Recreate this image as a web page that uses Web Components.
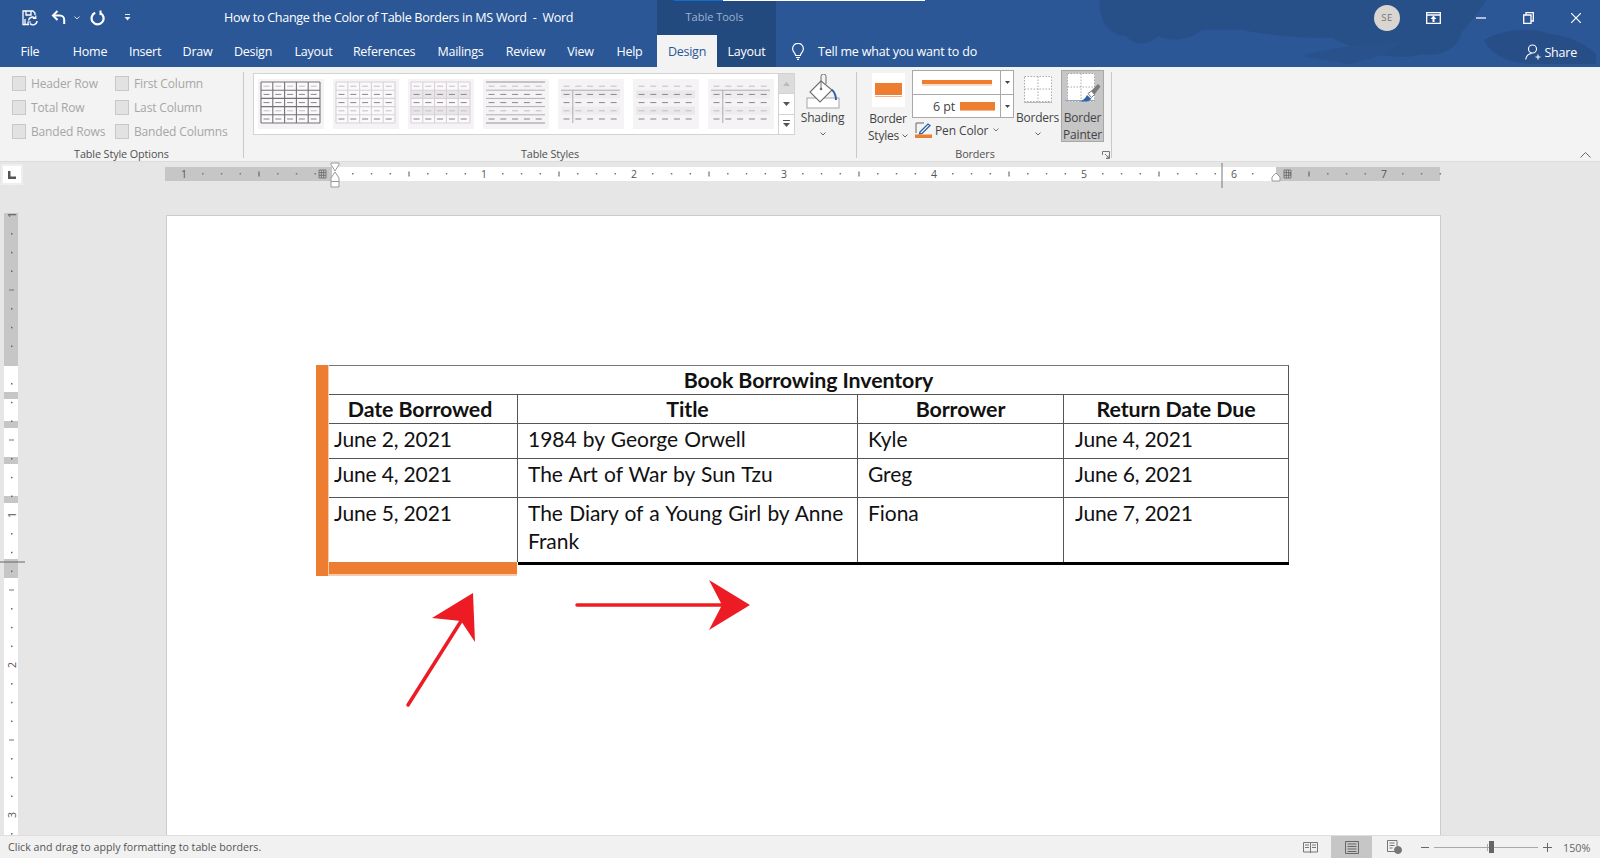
<!DOCTYPE html>
<html lang="en">
<head>
<meta charset="utf-8">
<title>How to Change the Color of Table Borders in MS Word - Word</title>
<style>
  html, body { margin: 0; height: 100%; overflow: hidden; background: #e6e6e6; }
  body { font-family: "Open Sans", "Noto Sans", sans-serif; }
</style>
</head>
<body>
<word-app>
  <word-titlebar></word-titlebar>
  <word-ribbon></word-ribbon>
  <word-document>
    <word-table></word-table>
  </word-document>
  <word-status>Click and drag to apply formatting to table borders.</word-status>
</word-app>

<script>
// shared base: open shadow root filled from css + render()
class Part extends HTMLElement {
  connectedCallback() {
    this.attachShadow({ mode: "open" });
    this.shadowRoot.innerHTML = `<style>${this.css()}</style>${this.render()}`;
  }
  css() { return ":host{display:block}"; }
  render() { return "<slot></slot>"; }
}

class WordApp extends Part {
  css() {
    return `:host { display: flex; flex-direction: column; width: 1600px; height: 858px; overflow: hidden; }`;
  }
}

const TABS = [
  ["File", 40, 12], ["Home", 56], ["Insert", 54], ["Draw", 51], ["Design", 60], ["Layout", 61],
  ["References", 80], ["Mailings", 73], ["Review", 57], ["View", 53], ["Help", 45, 5],
  ["Design", 60, 0, "active"], ["Layout", 59],
];

class WordTitlebar extends Part {
  css() {
    return `
      :host {
        display: block; position: relative; height: 67px; flex: none; color: #fff; overflow: hidden;
        background: linear-gradient(to right, #2b5797 657px, #234a7f 657px, #234a7f 776px, #2b5797 776px);
        font-size: 12.5px;
      }
      .clouds { position: absolute; left: 0; top: 0; }
      .progress { position: absolute; left: 674px; top: 0; width: 251px; height: 1px;
        background: linear-gradient(to right, #0f6fd0 49px, #fff 49px); }
      .row { position: relative; display: flex; align-items: center; }
      .top { height: 35px; }
      .bottom { height: 32px; }
      svg { display: block; flex: none; }
      .title { margin-left: 93px; width: 431px; white-space: nowrap; letter-spacing: -.3px; font-size: 12.6px; }
      .context { width: 119px; text-align: center; color: #9fb3d1; font-size: 11px; margin-top: -2px; }
      .tab { flex: none; height: 32px; line-height: 34px; text-align: center; letter-spacing: -.25px; }
      .tab.active { background: #f3f3f3; color: #2b5797; }
      .tell { margin-left: 14px; letter-spacing: -.2px; white-space: nowrap; }
      .share { margin-left: auto; margin-right: 23px; margin-top: 2px; display: flex; align-items: center; gap: 3px; letter-spacing: -.2px; }
      .avatar { width: 26px; height: 26px; border-radius: 50%; background: #d9d5d1; color: #777;
        font-size: 9.5px; line-height: 26px; text-align: center; letter-spacing: .5px; }
      .controls { margin-left: auto; display: flex; align-items: center; margin-right: 19px; }
    `;
  }
  render() {
    const tabs = TABS.map(([name, w, gap, cls]) =>
      `<div class="tab ${cls || ""}" style="width:${w}px;margin-right:${gap || 0}px">${name}</div>`).join("");
    return `
      <svg class="clouds" width="1600" height="68" viewBox="0 0 1600 68" fill="#285088">
        <path d="M1100 0c-2 18 8 36 26 36 10 12 24 8 32 0 18 8 34 2 44-6l40 0c30 6 60 8 90 8 16 8 60 26 90 16 20 4 36-6 40-22 12-14 20-24 24-32z"/>
        <path d="M1484 40c18-10 44-14 66-6 20 2 34 10 46 20v10h-60c-20 0-44-6-52-24z" fill="#274e86"/>
        <path d="M1300 56c30-8 62-12 100-14-6 10-30 18-52 22z" fill="#29518c"/>
      </svg>
      <div class="progress"></div>
      <div class="row top">
        <svg style="margin-left:22px" width="16" height="16" viewBox="0 0 16 16" fill="none" stroke="#fff" stroke-width="1.3">
          <path d="M7 14.5H1V1h10l2 2v2"/><path d="M4 1v4h5V1M3 9v5"/>
          <path d="M6.5 10.5a4 4 0 0 1 7-2M15 11a4 4 0 0 1-7 2.5" stroke-width="1.4"/>
          <path d="M13.8 5.5v3h-3M6 15v-3h3" stroke-width="1.2"/>
        </svg>
        <svg style="margin-left:13px" width="16" height="15" viewBox="0 0 16 15" fill="none" stroke="#fff" stroke-width="2">
          <path d="M2.5 5.5H9a4.2 4.2 0 0 1 4.2 4.2V14"/><path d="M6.5 1 2 5.5 6.5 10"/>
        </svg>
        <svg style="margin-left:7px" width="6" height="4" viewBox="0 0 6 4" fill="none" stroke="#d5deec"><path d="M.5.5 3 3 5.5.5"/></svg>
        <svg style="margin-left:10px" width="15" height="16" viewBox="0 0 15 16" fill="none" stroke="#fff" stroke-width="2.2">
          <path d="M5.2 2.8a6 6 0 1 0 5 .1"/><path d="M10.5 .5v4.6" stroke-width="2"/>
        </svg>
        <svg style="margin-left:19px" width="7" height="7" viewBox="0 0 7 7" fill="#e8edf5"><path d="M1 0h5v1H1zM.5 3h6L3.5 6.500z"/></svg>
        <div class="title">How to Change the Color of Table Borders in MS Word&nbsp; -&nbsp; Word</div>
        <div class="context">Table Tools</div>
        <div class="controls">
          <div class="avatar" style="margin-right:26px">SE</div>
          <svg style="margin-right:35px" width="15" height="12" viewBox="0 0 15 12"><path d="M.7.7h13.600v10.600H.7zM.7 3h13.600" fill="none" stroke="#fff" stroke-width="1.300"/><path d="M7.500 3.500 4.500 7h2v3h2V7h2z" fill="#fff"/></svg>
          <svg style="margin-right:37px" width="10" height="2" viewBox="0 0 10 2"><path d="M0 1h10" stroke="#e6ecf5" stroke-width="1.400"/></svg>
          <svg style="margin-right:37px" width="11" height="12" viewBox="0 0 11 12" fill="none" stroke="#fff" stroke-width="1.300"><path d="M.7 3h7.300v8.300H.7zM3 3V.7h7.300v8.300H8"/></svg>
          <svg width="10" height="10" viewBox="0 0 10 10" fill="none" stroke="#fff" stroke-width="1.200"><path d="M0 0l10 10M10 0 0 10"/></svg>
        </div>
      </div>
      <div class="row bottom">
        <div style="width:10px;flex:none"></div>
        ${tabs}
        <svg style="margin-left:16px;margin-top:1px" width="12" height="17" viewBox="0 0 12 17" fill="none" stroke="#fff" stroke-width="1.200"><path d="M3.600 12.500c0-2.500-3-3.500-3-6.800a5.400 5.400 0 0 1 10.800 0c0 3.300-3 4.300-3 6.800zM4 14.500h4M5 16.300h2"/></svg>
        <div class="tell">Tell me what you want to do</div>
        <div class="share">
          <svg width="16" height="16" viewBox="0 0 16 16" fill="none" stroke="#fff" stroke-width="1.100"><circle cx="7.500" cy="5" r="4"/><path d="M.7 15.500c.6-3.500 3-5.800 6-6M10.500 13h5M13 10.500v5"/></svg>
          <span>Share</span>
        </div>
      </div>`;
  }
}

class RibbonGroup extends Part {
  css() {
    return `
      :host { display: flex; flex-direction: column; flex: none; height: 86px; margin-top: 5px;
        border-right: 1px solid #c9c9c9; box-sizing: border-box; position: relative; }
      .content { flex: 1; display: flex; min-height: 0; }
      .label { height: 16px; margin-bottom: -4px; line-height: 16px; text-align: center; font-size: 10.800px;
        color: #505050; letter-spacing: -.1px; }
      :host([launcher]) .label { padding-right: 18px; }
      svg { position: absolute; right: 1px; bottom: -1px; }
    `;
  }
  render() {
    const launcher = this.hasAttribute("launcher")
      ? `<svg width="8" height="8" viewBox="0 0 8 8" fill="none" stroke="#777"><path d="M.5 4V.5H7.500v7H4M3 3l4 4M7 4.500V7H4.500"/></svg>` : "";
    return `<div class="content"><slot></slot></div><div class="label">${this.getAttribute("label")}</div>${launcher}`;
  }
}

class RibbonCheck extends Part {
  css() {
    return `
      :host { display: flex; align-items: center; height: 24px; color: #a6a6a6; font-size: 12px; letter-spacing: -.15px; white-space: nowrap; }
      i { width: 12px; height: 13px; margin-right: 5px; flex: none; background: #e2e2e2; border: 1px solid #c8c8c8; }
    `;
  }
  render() { return `<i></i><slot></slot>`; }
}

// little table-style preview in the gallery
class TableThumb extends Part {
  css() { return `:host { display: block; flex: none; width: 66px; height: 50px; background: #f6f3f6; } svg { display: block; }`; }
  render() {
    const kind = this.getAttribute("kind");
    const x0 = 3, y0 = 3, cw = 11.8, rh = 8.2;
    let s = "";
    const line = (x1, y1, x2, y2, c, w) => `<path d="M${x1} ${y1}L${x2} ${y2}" stroke="${c}" stroke-width="${w || 1}"/>`;
    const band = (y, c) => `<rect x="${x0}" y="${y}" width="${cw * 5}" height="${rh}" fill="${c}"/>`;
    if (kind === "grid" || kind === "light" || kind === "banded") {
      const c = kind === "grid" ? "#767276" : "#d6d2d6";
      s += `<rect x="${x0}" y="${y0}" width="${cw * 5}" height="${rh * 5}" fill="#fbf9fb"/>`;
      if (kind === "banded") s += band(y0 + rh, "#e9e6e9") + band(y0 + rh * 3, "#e9e6e9");
      for (let i = 0; i <= 5; i++) {
        s += line(x0 + i * cw, y0, x0 + i * cw, y0 + rh * 5, c, 1.1);
        s += line(x0, y0 + i * rh, x0 + cw * 5, y0 + i * rh, c, 1.1);
      }
    } else if (kind === "lines") {
      for (let i = 0; i <= 5; i++) s += line(x0, y0 + i * rh, x0 + cw * 5, y0 + i * rh, i % 5 === 0 ? "#c6c2c6" : "#b2aeb2", i % 5 === 0 ? 2 : 1);
    } else if (kind === "stub") {
      s += band(y0 + rh, "#efecef") + band(y0 + rh * 3, "#efecef");
      s += line(x0, y0 + rh, x0 + cw * 5, y0 + rh, "#aeaaae", 1);
      s += line(x0 + cw, y0 + rh, x0 + cw, y0 + rh * 5, "#aeaaae", 1);
    } else if (kind === "plain") {
      s += band(y0 + rh, "#ebe8eb") + band(y0 + rh * 3, "#ebe8eb");
    }
    for (let r = 0; r < 5; r++) {
      for (let c = 0; c < 5; c++) {
        const x = x0 + c * cw + 2.5, y = y0 + r * rh + 4.2;
        const col = r === 0 || r === 3 ? "#c2bec2" : "#8a868a";
        s += line(x, y, x + 6, y, col, 1);
      }
    }
    return `<svg width="66" height="50" viewBox="0 0 66 50">${s}</svg>`;
  }
}

class StyleGallery extends Part {
  css() {
    return `
      :host { display: flex; flex: none; width: 542px; height: 62px; box-sizing: border-box; margin: 1px 0 0 9px;
        background: #fff; border: 1px solid #d3d3d3; }
      .items { flex: 1; display: flex; gap: 9px; padding: 5px 0 0 4px; }
      .scroll { width: 15px; flex: none; display: flex; flex-direction: column; border-left: 1px solid #d3d3d3; }
      .scroll div { flex: 1; display: flex; align-items: center; justify-content: center; }
      .scroll div + div { border-top: 1px solid #d3d3d3; }
      .up { background: #dcdcdc; }
    `;
  }
  render() {
    return `<div class="items"><slot></slot></div>
      <div class="scroll">
        <div class="up"><svg width="7" height="4" viewBox="0 0 7 4" fill="#bbb"><path d="M0 4h7L3.500 0z"/></svg></div>
        <div><svg width="7" height="4" viewBox="0 0 7 4" fill="#555"><path d="M0 0h7L3.500 4z"/></svg></div>
        <div><svg width="7" height="8" viewBox="0 0 7 8" fill="#555"><path d="M0 0h7v1H0zM0 3h7L3.500 7z"/></svg></div>
      </div>`;
  }
}

// tall ribbon button: icon on top, caption under it, optional chevron
class RibbonButton extends Part {
  css() {
    return `
      :host { display: flex; flex-direction: column; align-items: center; flex: none; box-sizing: border-box;
        font-size: 12px; color: #444; line-height: 16.500px; letter-spacing: -.2px; text-align: center; white-space: nowrap; }
      :host([pressed]) { background: #c6c6c6; border: 1px solid #a8a8a8; color: #444; }
      .icon { display: flex; justify-content: center; align-items: flex-end; }
      .chev { display: block; margin: 5px auto 0; }
    `;
  }
  render() {
    const chev = this.hasAttribute("chevron")
      ? `<svg class="chev" width="6" height="4" viewBox="0 0 6 4" fill="none" stroke="#666"><path d="M.5.5 3 3 5.500.5"/></svg>` : "";
    return `<div class="icon"><slot name="icon"></slot></div><div><slot></slot></div>${chev}`;
  }
}

class BorderControls extends Part {
  css() {
    return `
      :host { display: block; flex: none; width: 102px; margin-left: 1px; }
      .box { height: 48px; box-sizing: border-box; border: 1px solid #a9a9a9; background: #fff; display: grid;
        grid-template-columns: 1fr 13px; grid-template-rows: 1fr 1fr; }
      .box > div { display: flex; align-items: center; min-width: 0; }
      .cell-b { border-top: 1px solid #a9a9a9; }
      .drop { border-left: 1px solid #a9a9a9; justify-content: center; }
      .pen { display: flex; align-items: center; height: 20px; margin-top: 2px; padding-left: 3px; font-size: 12px; color: #444; letter-spacing: -.12px; }
      .pt { font-size: 12.500px; color: #444; margin-left: 20px; margin-right: 5px; letter-spacing: -.1px; }
    `;
  }
  render() {
    const arrow = `<svg width="5" height="3" viewBox="0 0 5 3" fill="#444"><path d="M0 0h5L2.500 3z"/></svg>`;
    return `
      <div class="box">
        <div><svg style="margin-left:9px" width="70" height="7" viewBox="0 0 70 7"><rect y="1" width="70" height="4" fill="#ed7d31"/><rect y="5.500" width="70" height="1" fill="#f6b98f"/></svg></div>
        <div class="drop">${arrow}</div>
        <div class="cell-b"><span class="pt">6 pt</span><svg width="35" height="9" viewBox="0 0 35 9"><rect width="35" height="8" fill="#ed7d31"/><rect y="8" width="35" height="1" fill="#f6b98f"/></svg></div>
        <div class="cell-b drop">${arrow}</div>
      </div>
      <div class="pen">
        <svg width="18" height="16" viewBox="0 0 18 16" fill="none" style="margin-right:2px;flex:none">
          <path d="M1 11V1h8" stroke="#666"/><path d="M5 10 13 2l2 1.500L7 11.500 4.500 12z" fill="#fff" stroke="#2b5fa8" stroke-width="1.300"/>
          <rect y="12.500" width="17" height="3.500" fill="#ed7d31"/>
        </svg>
        <span>Pen Color</span>
        <svg style="margin-left:5px" width="6" height="4" viewBox="0 0 6 4" fill="none" stroke="#777"><path d="M.5.5 3 3 5.500.5"/></svg>
      </div>`;
  }
}

class WordRibbon extends Part {
  css() {
    return `
      :host { display: flex; height: 95px; flex: none; box-sizing: border-box; background: #f3f3f3;
        border-bottom: 1px solid #dcdcdc; position: relative; }
      .checks { display: grid; grid-template-columns: 103px auto; margin: -1px 0 0 12px; align-content: start; }
      .collapse { position: absolute; right: 9px; bottom: 3px; }
      svg { display: block; }
      .border-styles { width: 46px; margin-left: 8px; }
      .white { width: 33px; height: 34px; background: #fff; display: flex; align-items: center; justify-content: center; margin: 3px 0 4px; }
      .group3 { display: flex; margin-top: -2px; }
      .g3btn { margin-left: 2px; width: 43px; padding-top: 6px; }
      .painter { margin-left: 2px; width: 43px; height: 72px; padding-top: 1px; }
    `;
  }
  render() {
    return `
      <ribbon-group label="Table Style Options" style="width:244px">
        <div class="checks">
          <ribbon-check>Header Row</ribbon-check><ribbon-check>First Column</ribbon-check>
          <ribbon-check>Total Row</ribbon-check><ribbon-check>Last Column</ribbon-check>
          <ribbon-check>Banded Rows</ribbon-check><ribbon-check>Banded Columns</ribbon-check>
        </div>
      </ribbon-group>
      <ribbon-group label="Table Styles" style="width:613px">
        <style-gallery>
          <table-thumb kind="grid"></table-thumb>
          <table-thumb kind="light"></table-thumb>
          <table-thumb kind="banded"></table-thumb>
          <table-thumb kind="lines"></table-thumb>
          <table-thumb kind="stub"></table-thumb>
          <table-thumb kind="plain"></table-thumb>
          <table-thumb kind="stub"></table-thumb>
        </style-gallery>
        <ribbon-button chevron style="margin-left:5px;width:45px;padding-top:2px">
          <svg slot="icon" width="34" height="35" viewBox="0 0 34 35" fill="none" style="margin-bottom:1px">
            <rect x="1" y="24" width="32" height="10" fill="#fff" stroke="#a5a5a5"/>
            <path d="M15 7 4 18l10 10 12-12z" fill="#fff" stroke="#6d6d6d" stroke-width="1.100"/>
            <path d="M15 15V2.500a2.500 2.500 0 0 1 5 0V10" stroke="#6d6d6d"/>
            <circle cx="15" cy="15" r="1.300" fill="#6d6d6d"/>
            <path d="M26 15c3 2 5 6 5 11h-2c0-4-1-7-4-10z" fill="#2b5fa8"/>
          </svg>
          Shading
        </ribbon-button>
      </ribbon-group>
      <ribbon-group label="Borders" launcher style="width:255px">
        <div class="group3">
          <ribbon-button class="border-styles">
            <div slot="icon" class="white"><svg width="27" height="15" viewBox="0 0 27 15"><rect width="27" height="12" fill="#ed7d31"/><rect y="13" width="27" height="1" fill="#f4b183"/></svg></div>
            Border<br>Styles <svg style="display:inline;vertical-align:2px" width="6" height="4" viewBox="0 0 6 4" fill="none" stroke="#666"><path d="M.5.5 3 3 5.500.5"/></svg>
          </ribbon-button>
          <border-controls></border-controls>
          <ribbon-button chevron class="g3btn">
            <svg slot="icon" width="28" height="27" viewBox="0 0 28 27" fill="#fff" stroke="#aaa" stroke-dasharray="1.500 1.500" style="margin-bottom:7px"><path d="M.5.5h27v25h-27zM14 .5v25M.5 13h27"/><path d="M0 26.500h28" stroke="#b9b9b9" stroke-dasharray="none"/></svg>
            Borders
          </ribbon-button>
          <ribbon-button pressed class="painter">
            <svg slot="icon" width="38" height="36" viewBox="0 0 38 36" fill="none" style="margin-bottom:2px">
              <path d="M3.500 1.500h27v28h-27zM17 1.500v28M3.500 15h27" fill="#fff" stroke="#aaa" stroke-dasharray="1.500 1.500"/>
              <path d="M1 28.500h30" stroke="#8fa5c8"/>
              <path d="M27 19l7-7 2.500 2.500-6 8z" fill="#7a7a7a"/>
              <path d="M24 21.500l3.500-2.500 3 3.500-3 3z" fill="#fff" stroke="#777"/>
              <path d="M23 23l4.500 4-4 2.500H16c3-1 5.500-3.500 7-6.500z" fill="#2f62a8"/>
            </svg>
            Border<br>Painter
          </ribbon-button>
        </div>
      </ribbon-group>
      <svg class="collapse" width="11" height="6" viewBox="0 0 11 6" fill="none" stroke="#666"><path d="M.5 5.500 5.500.5l5 5"/></svg>`;
  }
}

class HRuler extends Part {
  css() { return `:host { display: block; flex: none; margin-left: 144px; } svg { display: block; overflow: visible; }`; }
  render() {
    const X = v => v - 165, zero = 334, step = 18.75;
    let s = `<rect x="0" y="5" width="1275" height="14" fill="#c6c6c6"/><rect x="${X(332)}" y="5" width="${1276 - 332}" height="14" fill="#fff"/>`;
    for (let n = -8; n <= 59; n++) {
      const x = X(zero + n * step);
      if (x < 0 || n === 0 || n === 50) continue;
      if (n % 8 === 0) s += `<text x="${x}" y="16" text-anchor="middle" font-size="10.500" fill="#555">${Math.abs(n / 8)}</text>`;
      else if (n % 4 === 0) s += `<path d="M${x} 9.500v5" stroke="#555"/>`;
      else s += `<rect x="${x - .7}" y="11" width="1.500" height="1.500" fill="#777"/>`;
    }
    const grid = x => `<path d="M${x} 8h7v8h-7zM${x + 2.300} 8v8M${x + 4.600} 8v8M${x} 10.600h7M${x} 13.300h7" fill="none" stroke="#666" stroke-width=".8"/>`;
    s += grid(X(319)) + grid(X(1284));
    const mx = X(335);
    s += `<path d="M${mx - 4} 1h8v1.500L${mx} 9 ${mx - 4} 2.500z" fill="#fff" stroke="#999"/>`;
    s += `<path d="M${mx} 10l4 6v9h-8v-9zM${mx - 4} 19.500h8" fill="#fff" stroke="#999"/>`;
    s += `<path d="M${X(1276) - 4} 19v-4l4-4 4 4v4z" fill="#fff" stroke="#999"/>`;
    s += `<path d="M${X(1222)} 1v25" stroke="#777"/>`;
    return `<svg width="1275" height="27" viewBox="0 0 1275 27">${s}</svg>`;
  }
}

class VRuler extends Part {
  css() { return `:host { display: block; flex: none; margin-left: 4px; width: 14px; } svg { display: block; overflow: visible; }`; }
  render() {
    const Y = v => v - 213, zero = 365, step = 18.75;
    const gray = [[213, 366], [392, 399], [421, 428], [457, 464], [496, 503], [559, 578]];
    let s = `<rect x="0" y="0" width="14" height="622" fill="#fff"/>`;
    gray.forEach(([a, b]) => { s += `<rect x="0" y="${Y(a)}" width="14" height="${b - a}" fill="#c6c6c6"/>`; });
    for (let n = -8; n <= 25; n++) {
      const y = Y(zero + n * step);
      if (n === 0) continue;
      if (n % 8 === 0) s += `<text transform="translate(11.500 ${y}) rotate(-90)" text-anchor="middle" font-size="10.500" fill="#555">${Math.abs(n / 8)}</text>`;
      else if (n % 4 === 0) s += `<path d="M5 ${y}h5" stroke="#777"/>`;
      else s += `<rect x="7" y="${y - .7}" width="1.500" height="1.500" fill="#666"/>`;
    }
    s += `<path d="M-4 ${Y(562)}h25" stroke="#666"/>`;
    return `<svg width="14" height="622" viewBox="0 0 14 622">${s}</svg>`;
  }
}

class WordDocument extends Part {
  css() {
    return `
      :host { display: flex; flex-direction: column; flex: 1; min-height: 0; background: #e6e6e6; overflow: hidden; }
      .rulers { display: flex; height: 51px; flex: none; }
      .tabstop { flex: none; width: 18px; height: 17px; margin: 4px 0 0 3px; background: #fff; box-shadow: 0 0 0 2px #efefef;
        display: flex; align-items: center; justify-content: center; }
      .body { flex: 1; display: flex; min-height: 0; }
      .page { position: relative; width: 1275px; margin: 2px 0 0 148px; box-sizing: border-box; background: #fff;
        border: 1px solid #cbcbcb; border-bottom: none; padding: 149px 0 0 149px; }
      .marks { position: absolute; left: -1px; top: -1px; }
    `;
  }
  render() {
    return `
      <div class="rulers">
        <div class="tabstop"><svg width="8" height="8" viewBox="0 0 8 8" fill="#555"><path d="M0 0h2.500v5.500H8V8H0z"/></svg></div>
        <h-ruler></h-ruler>
      </div>
      <div class="body">
        <v-ruler></v-ruler>
        <div class="page">
          <slot></slot>
          <!-- red call-out arrows drawn over the page -->
          <svg class="marks" width="700" height="520" viewBox="166 215 700 520">
            <path d="M408 705 463 618" stroke="#ed1c24" stroke-width="3.500" stroke-linecap="round"/>
            <path d="M473 593 432 618 461 621 475 642z" fill="#ed1c24"/>
            <path d="M577 605H725" stroke="#ed1c24" stroke-width="3.500" stroke-linecap="round"/>
            <path d="M750 605 709 580 722 605 709 630z" fill="#ed1c24"/>
          </svg>
        </div>
      </div>`;
  }
}

const ROWS = [
  ["June 2, 2021", "1984 by George Orwell", "Kyle", "June 4, 2021"],
  ["June 4, 2021", "The Art of War by Sun Tzu", "Greg", "June 6, 2021"],
  ["June 5, 2021", "The Diary of a Young Girl by Anne Frank", "Fiona", "June 7, 2021"],
];

class WordTable extends Part {
  css() {
    return `
      :host { display: grid; width: 973px; color: #111; font-family: Lato, "Open Sans", sans-serif; font-size: 21px;
        grid-template-columns: 13px 188px 340px 206px 226px; grid-template-rows: 29px 29px 35px 39px 65px 14px;
        letter-spacing: -.05px; word-spacing: 1px; }
      .bar { grid-row: 1 / 7; background: #ed7d31; border-right: 1px solid #f8cbad; box-sizing: content-box; width: 12px; }
      .cell { box-sizing: border-box; border-left: 1px solid #555; border-top: 1px solid #555; line-height: 28px; padding: 1px 10px 0; }
      .cell.first { border-left: none; padding-left: 5px; }
      .cell.last { border-right: 1px solid #555; }
      .cell.last:not(.head) { padding-left: 11px; }
      .cell.first:not(.head), .cell.last:not(.head) { letter-spacing: -.15px; word-spacing: 0; }
      .cell.head { text-align: center; font-weight: 700; font-size: 21.400px; line-height: 28px; padding: 0; letter-spacing: -.1px; word-spacing: 0; }
      .cell.head.first { padding: 0 6px 0 0; }
      .cell.title { grid-column: 2 / 6; border-left: none; border-top-color: #777; padding: 0 0 0 0; }
      .foot { background: #ed7d31; height: 12px; border-bottom: 2px solid #f8cbad; box-sizing: content-box; }
      .rule { grid-column: 3 / 6; height: 3px; background: #000; margin-left: 1px; }
    `;
  }
  render() {
    const heads = ["Date Borrowed", "Title", "Borrower", "Return Date Due"];
    const cell = (t, i, extra = "") =>
      `<div class="cell ${extra} ${i === 0 ? "first" : ""} ${i === 3 ? "last" : ""}">${t}</div>`;
    return `
      <div class="bar"></div>
      <div class="cell head title last">Book Borrowing Inventory</div>
      ${heads.map((h, i) => cell(h, i, "head")).join("")}
      ${ROWS.map(r => r.map((t, i) => cell(t, i)).join("")).join("")}
      <div class="foot"></div>
      <div class="rule"></div>`;
  }
}

class WordStatus extends Part {
  css() {
    return `
      :host { display: flex; align-items: center; height: 23px; flex: none; box-sizing: border-box; position: relative;
        background: #f1f1f1; border-top: 1px solid #dedede; padding-left: 8px; color: #555; font-size: 10.650px; }
      .right { margin-left: auto; display: flex; align-items: center; height: 100%; }
      svg { display: block; flex: none; }
      .on { width: 41px; height: 100%; background: #c6c6c6; display: flex; align-items: center; justify-content: center; margin: 0 15px 0 13px; }
      .slider { position: relative; width: 104px; height: 1px; background: #a8a8a8; margin: 0 5px; }
      .slider i { position: absolute; left: 53px; top: -1px; width: 1px; height: 3px; background: #a8a8a8; margin-top: -2px; height: 7px; }
      .slider b { position: absolute; left: 55px; top: -6px; width: 5px; height: 12px; background: #666; }
      .zoom { margin: 0 12px 0 11px; width: 25px; color: #666; font-size: 10.800px; }
    `;
  }
  render() {
    return `<slot></slot>
      <div class="right">
        <svg width="15" height="13" viewBox="0 0 15 13" fill="none" stroke="#777"><path d="M7.500 12V1.500H.5v9.500h14V1.500h-7M2 4h4M2 6.500h4M9 4h4M9 6.500h4"/></svg>
        <div class="on"><svg width="14" height="13" viewBox="0 0 14 13" fill="none" stroke="#666"><path d="M.5.500h13v12H.5zM2.500 3h9M2.500 5.500h9M2.500 8h9M2.500 10.500h9"/></svg></div>
        <svg width="15" height="14" viewBox="0 0 15 14" fill="none" stroke="#777"><path d="M8 11.500H.5V.500h9.500V6M2.500 3h5M2.500 5.500h5M2.500 8h3"/><circle cx="11" cy="10" r="3.500" fill="#777"/></svg>
        <svg style="margin-left:19px" width="8" height="1" viewBox="0 0 8 1"><path d="M0 .5h8" stroke="#666"/></svg>
        <div class="slider"><i></i><b></b></div>
        <svg width="9" height="9" viewBox="0 0 9 9"><path d="M0 4.500h9M4.500 0v9" stroke="#666"/></svg>
        <div class="zoom">150%</div>
      </div>`;
  }
}

customElements.define("word-app", WordApp);
customElements.define("word-titlebar", WordTitlebar);
customElements.define("ribbon-group", RibbonGroup);
customElements.define("ribbon-check", RibbonCheck);
customElements.define("table-thumb", TableThumb);
customElements.define("style-gallery", StyleGallery);
customElements.define("ribbon-button", RibbonButton);
customElements.define("border-controls", BorderControls);
customElements.define("word-ribbon", WordRibbon);
customElements.define("h-ruler", HRuler);
customElements.define("v-ruler", VRuler);
customElements.define("word-document", WordDocument);
customElements.define("word-table", WordTable);
customElements.define("word-status", WordStatus);
</script>
</body>
</html>
